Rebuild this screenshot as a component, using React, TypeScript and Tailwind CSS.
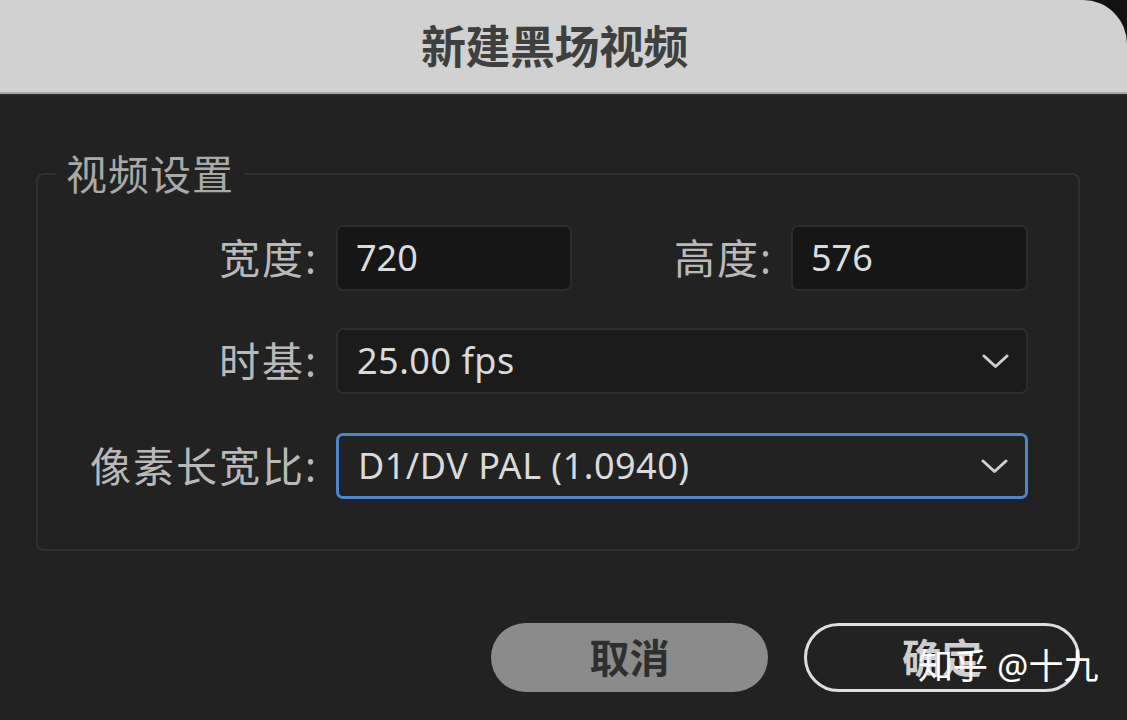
const font = { fontFamily: '"Noto Sans", "Noto Sans CJK SC", sans-serif' };

const Label = ({ text, width }: { text: string; width: string }) => (
  <span className={`${width} shrink-0 text-right text-[41px] leading-none tracking-[2px] text-[#b9b9b9]`}>{text}</span>
);

const Chevron = () => (
  <svg width="27" height="15" viewBox="0 0 27 15" fill="none" className="text-[#cfcfcf]">
    <polyline points="2,2 13.5,12.5 25,2" stroke="currentColor" strokeWidth="3" strokeLinecap="round" strokeLinejoin="round" />
  </svg>
);

const Select = ({ value, focused }: { value: string; focused?: boolean }) => (
  <div
    className={`ml-[18px] flex h-[66px] w-[692px] items-center justify-between rounded-[7px] pl-[19px] pr-[17px] ${
      focused ? "border-[3px] border-[#4c86cf] bg-[#222222]" : "border-2 border-[#2d2d2d] bg-[#1b1b1b]"
    }`}
  >
    <span className="text-[36px] leading-none tracking-[0.5px] text-[#dadada]">{value}</span>
    <Chevron />
  </div>
);

export default function App() {
  return (
    <div className="relative h-[720px] w-[1127px] overflow-hidden bg-[#111111]" style={font}>
      {/* Title bar */}
      <div className="flex h-[92px] items-center justify-center rounded-tr-[44px] bg-[#d0d1d0] pr-[18px]">
        <h1 className="text-[45px] font-bold leading-none tracking-[-0.5px] text-[#3f3f3f]">新建黑场视频</h1>
      </div>
      <div className="h-[2px] bg-[#a8a8a8]" />
      <div className="h-[2px] bg-[#282828]" />

      {/* Body */}
      <div className="h-[624px] bg-[#222222] pt-[56px]">
        <fieldset className="ml-[36px] w-[1044px] rounded-[8px] border-2 border-[#313131] pb-[50px] pt-[29px]">
          <legend className="ml-[18px] px-[10px] text-[41px] leading-[44px] tracking-[1px] text-[#a9a9a9]">视频设置</legend>

          {/* Width / height */}
          <div className="flex items-center">
            <Label text="宽度:" width="w-[280px]" />
            <div className="ml-[18px] flex h-[66px] w-[236px] items-center rounded-[7px] border-2 border-[#2c2c2c] bg-[#161616] pl-[18px]">
              <span className="text-[36px] leading-none text-[#dcdcdc]">720</span>
            </div>
            <Label text="高度:" width="w-[201px]" />
            <div className="ml-[18px] flex h-[66px] w-[237px] items-center rounded-[7px] border-2 border-[#2c2c2c] bg-[#161616] pl-[18px]">
              <span className="text-[36px] leading-none text-[#dcdcdc]">576</span>
            </div>
          </div>

          {/* Timebase */}
          <div className="mt-[37px] flex items-center">
            <Label text="时基:" width="w-[280px]" />
            <Select value="25.00 fps" />
          </div>

          {/* Pixel aspect ratio */}
          <div className="mt-[39px] flex items-center">
            <Label text="像素长宽比:" width="w-[280px]" />
            <Select value="D1/DV PAL (1.0940)" focused />
          </div>
        </fieldset>

        {/* Buttons */}
        <div className="mt-[72px] flex justify-end gap-[36px] pr-[47px]">
          <button className="flex h-[69px] w-[277px] items-center justify-center rounded-full bg-[#8b8b8b] text-[40px] font-bold text-[#2f2f2f]">
            取消
          </button>
          <button className="flex h-[69px] w-[276px] items-center justify-center rounded-full border-[3px] border-[#dedede] text-[40px] font-bold text-[#cfcfcf]">
            确定
          </button>
        </div>
      </div>

      {/* Watermark */}
      <span className="absolute left-[918px] top-[648px] text-[35px] leading-none text-white">知乎 @十九</span>
    </div>
  );
}
